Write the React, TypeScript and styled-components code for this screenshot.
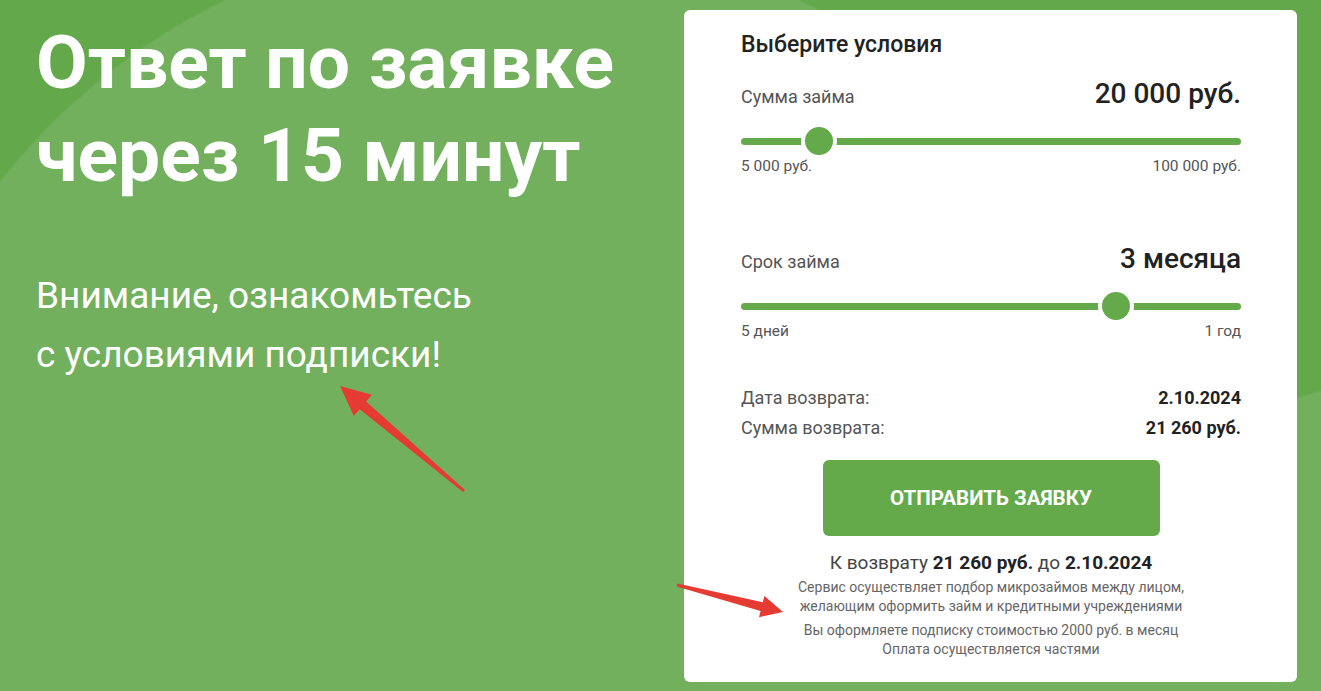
import React from 'react';
import styled, { createGlobalStyle } from 'styled-components';

const GlobalStyle = createGlobalStyle`
  html, body {
    margin: 0;
    padding: 0;
    overflow: hidden;
  }
  * {
    box-sizing: border-box;
  }
`;

const GREEN = '#64aa4b';

const Page = styled.div`
  position: relative;
  display: flex;
  width: 100vw;
  height: 691px;
  font-family: Roboto, 'Noto Sans', sans-serif;
  background-color: #63a94b;
  background-image:
    radial-gradient(circle 653px at 512px 585px, #72b05e 99.6%, rgba(114, 176, 94, 0) 100%),
    radial-gradient(circle 636px at 1500px 1000px, #72b05e 99.6%, rgba(114, 176, 94, 0) 100%);
`;

const Hero = styled.section`
  width: 684px;
  flex-shrink: 0;
  padding: 16px 0 0 36px;
  color: #fff;
`;

const Heading = styled.h1`
  margin: 0;
  font-size: 75px;
  line-height: 93px;
  font-weight: 700;
`;

const Notice = styled.p`
  margin: 64px 0 0;
  font-size: 37px;
  line-height: 59px;
  font-weight: 400;
`;

const Card = styled.section`
  width: 613px;
  height: 672px;
  margin-top: 10px;
  padding: 21px 56px 0 57px;
  background: #fff;
  border-radius: 6px;
  display: flex;
  flex-direction: column;
`;

const CardTitle = styled.h2`
  margin: 0;
  font-size: 23px;
  line-height: 28px;
  font-weight: 500;
  color: #222;
`;

const ValueRow = styled.div<{ $gap: number }>`
  display: flex;
  justify-content: space-between;
  align-items: baseline;
  margin-top: ${({ $gap }) => $gap}px;
  line-height: 36px;
`;

const Label = styled.span`
  font-size: 18px;
  color: #555;
`;

const Value = styled.span`
  font-size: 28px;
  font-weight: 500;
  color: #222;
`;

const SliderBox = styled.div`
  position: relative;
  height: 28px;
  margin-top: 12px;
  display: flex;
  align-items: center;
`;

const Track = styled.div`
  width: 100%;
  height: 7px;
  border-radius: 4px;
  background: ${GREEN};
`;

const Thumb = styled.div`
  position: absolute;
  top: 50%;
  width: 36px;
  height: 36px;
  margin: -18px 0 0 -18px;
  border-radius: 50%;
  border: 4px solid #fff;
  background: ${GREEN};
`;

const RangeLabels = styled.div`
  display: flex;
  justify-content: space-between;
  margin-top: 1px;
  font-size: 15.5px;
  line-height: 20px;
  color: #555;
`;

const Summary = styled.div`
  margin-top: 42px;
  display: flex;
  flex-direction: column;
`;

const SummaryRow = styled.div`
  display: flex;
  justify-content: space-between;
  font-size: 18px;
  line-height: 30px;
  color: #555;

  b {
    font-weight: 700;
    color: #222;
  }
`;

const SubmitButton = styled.button`
  align-self: center;
  width: 337px;
  height: 76px;
  margin-top: 17px;
  border: none;
  border-radius: 6px;
  background: ${GREEN};
  color: #fff;
  font-family: inherit;
  font-size: 20.5px;
  font-weight: 700;
  text-transform: uppercase;
  cursor: pointer;
`;

const Repay = styled.p`
  margin: 15px 0 0;
  text-align: center;
  font-size: 19px;
  line-height: 24px;
  color: #444;

  b {
    font-weight: 700;
    color: #222;
  }
`;

const Fine = styled.p<{ $gap: number }>`
  margin: ${({ $gap }) => $gap}px 0 0;
  text-align: center;
  font-size: 14px;
  line-height: 18.5px;
  color: #666;
`;

const Overlay = styled.svg`
  position: absolute;
  inset: 0;
  width: 100%;
  height: 100%;
  pointer-events: none;
`;

type Pt = [number, number];

function arrowPoints(tail: Pt, tip: Pt, tailW: number, neckW: number, headLen: number, headW: number) {
  const dx = tip[0] - tail[0];
  const dy = tip[1] - tail[1];
  const len = Math.hypot(dx, dy);
  const ux = dx / len;
  const uy = dy / len;
  const px = -uy;
  const py = ux;
  const nx = tip[0] - ux * headLen;
  const ny = tip[1] - uy * headLen;
  const pts: Pt[] = [
    [tail[0] + (px * tailW) / 2, tail[1] + (py * tailW) / 2],
    [nx + (px * neckW) / 2, ny + (py * neckW) / 2],
    [nx + px * headW, ny + py * headW],
    tip,
    [nx - px * headW, ny - py * headW],
    [nx - (px * neckW) / 2, ny - (py * neckW) / 2],
    [tail[0] - (px * tailW) / 2, tail[1] - (py * tailW) / 2],
  ];
  return pts.map((p) => p.map((v) => v.toFixed(1)).join(',')).join(' ');
}

function Slider({ percent }: { percent: number }) {
  return (
    <SliderBox>
      <Track />
      <Thumb style={{ left: `${percent}%` }} />
    </SliderBox>
  );
}

export default function App() {
  return (
    <>
      <GlobalStyle />
      <Page>
        <Hero>
          <Heading>
            Ответ по заявке
            <br />
            через 15 минут
          </Heading>
          <Notice>
            Внимание, ознакомьтесь
            <br />
            с условиями подписки!
          </Notice>
        </Hero>

        <Card>
          <CardTitle>Выберите условия</CardTitle>

          <ValueRow $gap={17}>
            <Label>Сумма займа</Label>
            <Value>20 000 руб.</Value>
          </ValueRow>
          <Slider percent={15.6} />
          <RangeLabels>
            <span>5 000 руб.</span>
            <span>100 000 руб.</span>
          </RangeLabels>

          <ValueRow $gap={65}>
            <Label>Срок займа</Label>
            <Value>3 месяца</Value>
          </ValueRow>
          <Slider percent={75} />
          <RangeLabels>
            <span>5 дней</span>
            <span>1 год</span>
          </RangeLabels>

          <Summary>
            <SummaryRow>
              <span>Дата возврата:</span>
              <b>2.10.2024</b>
            </SummaryRow>
            <SummaryRow>
              <span>Сумма возврата:</span>
              <b>21 260 руб.</b>
            </SummaryRow>
          </Summary>

          <SubmitButton>Отправить заявку</SubmitButton>

          <Repay>
            К возврату <b>21 260 руб.</b> до <b>2.10.2024</b>
          </Repay>
          <Fine $gap={3}>
            Сервис осуществляет подбор микрозаймов между лицом,
            <br />
            желающим оформить займ и кредитными учреждениями
          </Fine>
          <Fine $gap={6}>
            Вы оформляете подписку стоимостью 2000 руб. в месяц
            <br />
            Оплата осуществляется частями
          </Fine>
        </Card>

        {/* red annotation arrows drawn over the page */}
        <Overlay viewBox="0 0 1321 691" preserveAspectRatio="xMinYMin meet">
          <polygon points={arrowPoints([464, 491], [340, 386], 3, 10, 30, 14)} fill="#e53b33" />
          <polygon points={arrowPoints([677, 585], [783, 612], 3, 9, 22, 11)} fill="#e53b33" />
        </Overlay>
      </Page>
    </>
  );
}
